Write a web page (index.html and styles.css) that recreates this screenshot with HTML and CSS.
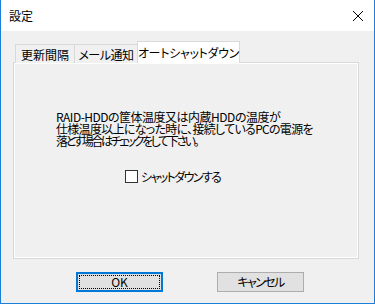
FILE: index.html
```html
<!DOCTYPE html>
<html lang="ja">
<head>
<meta charset="utf-8">
<title>設定</title>
<link rel="stylesheet" href="styles.css">
</head>
<body>
<div class="window">
  <div class="titlebar">
    <span class="title">設定</span>
    <svg class="close" width="12" height="12" viewBox="0 0 12 12"><path d="M1 1 L11 11 M11 1 L1 11" stroke="#000" stroke-width="1" fill="none"/></svg>
  </div>
  <div class="content">
    <div class="tabs">
      <div class="tab tab1">更新間隔</div>
      <div class="tab tab2">メール通知</div>
      <div class="tab active">オートシャットダウン</div>
    </div>
    <div class="panel">
      <div class="desc">
        <div class="line line1">RAID-HDDの筐体温度又は内蔵HDDの温度が</div>
        <div class="line line2">仕様温度以上になった時に、接続しているPCの電源を</div>
        <div class="line line3">落とす場合はチェックをして下さい。</div>
      </div>
      <label class="check"><span class="box"></span><span class="label">シャットダウンする</span></label>
    </div>
    <div class="buttons">
      <div class="btn ok"><span class="focus">OK</span></div>
      <div class="btn cancel"><span class="label2">キャンセル</span></div>
    </div>
  </div>
</div>
</body>
</html>
```
FILE: styles.css
```css
* { box-sizing: border-box; }
html, body { margin: 0; padding: 0; }
body {
  font-family: "Noto Sans CJK JP", "Noto Sans", sans-serif;
  font-size: 12px;
  font-feature-settings: "palt" 1;
  color: #000;
  background: #f0f0f0;
}
.window {
  width: 375px;
  height: 304px;
  display: flex;
  flex-direction: column;
  border-left: 1px solid #1a80d8;
  border-right: 1px solid #1a80d8;
  border-bottom: 1px solid #1a80d8;
}
.titlebar {
  height: 31px;
  background: #fff;
  display: flex;
  align-items: center;
  justify-content: space-between;
  padding-left: 8px;
  padding-right: 10px;
  flex: none;
}
.title { font-size: 12px; line-height: 12px; margin-top: 1px; font-feature-settings: normal; }
.close { display: block; }
.content {
  flex: 1;
  background: #f0f0f0;
  padding: 11px 15px 0 12px;
  display: flex;
  flex-direction: column;
}
.tabs {
  display: flex;
  align-items: flex-end;
  height: 21px;
  padding-left: 2px;
  margin-bottom: -1px;
  position: relative;
  z-index: 1;
}
.tab {
  height: 19px;
  border: 1px solid #d9d9d9;
  border-bottom: none;
  background: #f0f0f0;
  display: flex;
  align-items: center;
  justify-content: center;
  line-height: 12px;
  padding-top: 1px;
  white-space: nowrap;
}
.tab1 { width: 60px; font-feature-settings: normal; }
.tab2 { width: 63px; border-left: none; letter-spacing: -0.5px; }
.active {
  height: 22px;
  width: 103px;
  margin-left: -1px;
  background: #fff;
  padding-top: 0;
  letter-spacing: -0.3px;
}
.panel {
  height: 197px;
  border: 1px solid #d9d9d9;
  box-shadow: inset 0 0 0 1px #fff;
  background: #f0f0f0;
  padding: 48px 0 0 42px;
}
.desc { display: flex; flex-direction: column; }
.line {
  height: 12px;
  line-height: 12px;
  white-space: nowrap;
}
.line1 { letter-spacing: -0.5px; }
.line2 { letter-spacing: -0.7px; }
.line3 { letter-spacing: -2.4px; }
.check {
  display: flex;
  align-items: center;
  margin-top: 23px;
  margin-left: 69px;
  line-height: 12px;
}
.label { letter-spacing: -1.6px; }
.box {
  width: 13px;
  height: 13px;
  border: 1px solid #333;
  background: #fff;
  margin-right: 3px;
  flex: none;
}
.buttons {
  display: flex;
  margin-top: 13px;
  padding-left: 63px;
  gap: 54px;
}
.btn {
  width: 87px;
  height: 20px;
  background: #e1e1e1;
  display: flex;
  align-items: center;
  justify-content: center;
  line-height: 12px;
}
.ok {
  border: 2px solid #0078d7;
  padding: 1px;
}
.focus {
  width: 100%;
  height: 100%;
  border: 1px dotted #000;
  display: flex;
  align-items: center;
  justify-content: center;
}
.cancel {
  border: 1px solid #adadad;
}
.label2 { letter-spacing: -1.6px; }
```
